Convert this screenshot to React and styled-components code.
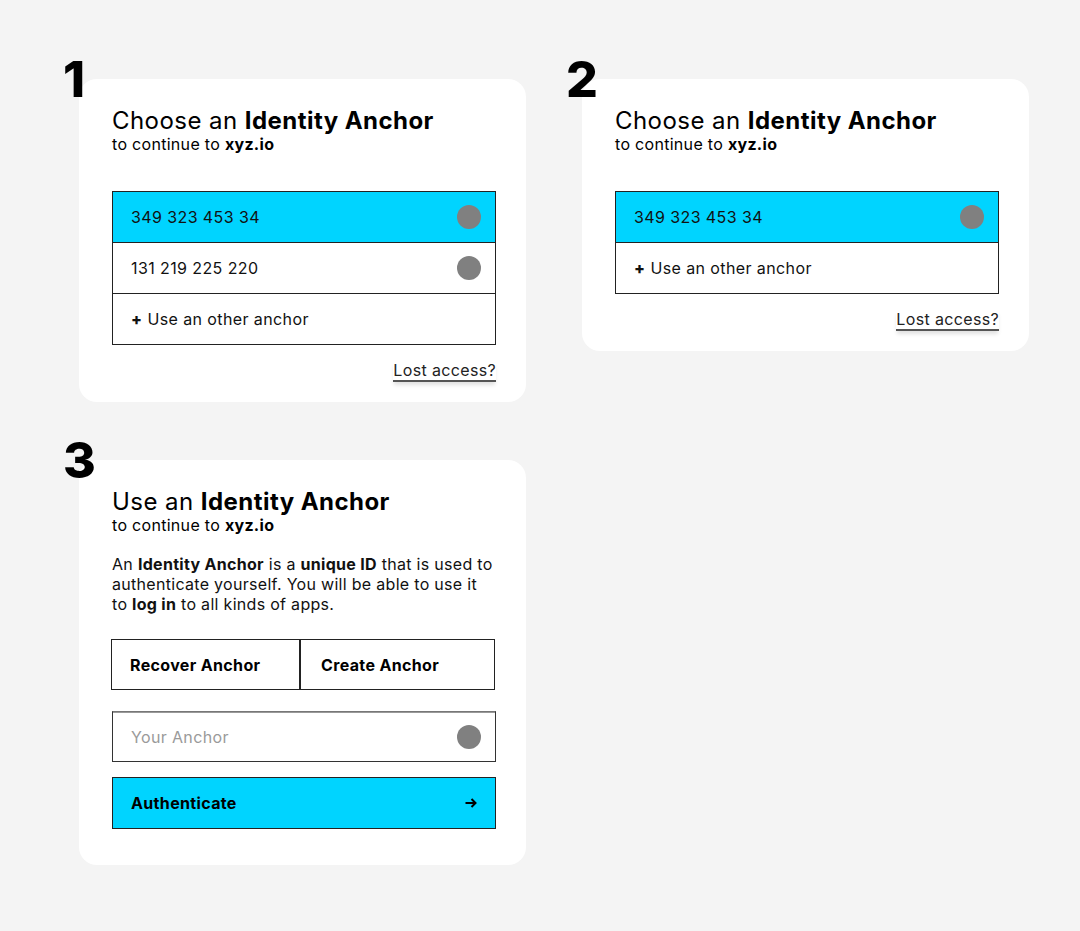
import React from "react";
import styled, { createGlobalStyle } from "styled-components";

const GlobalStyle = createGlobalStyle`
  * { box-sizing: border-box; }
  body {
    margin: 0;
    background: #f4f4f4;
    font-family: Inter, "Noto Sans", sans-serif;
    color: #111;
  }
`;

const Page = styled.div`
  display: grid;
  grid-template-columns: 447px 447px;
  align-content: start;
  align-items: start;
  column-gap: 56px;
  row-gap: 58px;
  padding: 79px 0 68px 79px;
`;

const Card = styled.section`
  position: relative;
  background: #fff;
  border-radius: 18px;
  padding: 27px 30px ${(p) => p.$bottom || "20px"} 33px;
  display: flex;
  flex-direction: column;
`;

const StepNumber = styled.span`
  position: absolute;
  left: -16px;
  top: -25px;
  font-size: 50px;
  line-height: 1;
  font-weight: 800;
  color: #000;
`;

const Title = styled.h1`
  margin: 0;
  font-size: 24px;
  font-weight: 400;
  line-height: 29px;
  letter-spacing: 0.45px;
  color: #000;

  b {
    font-weight: 700;
  }
`;

const Subtitle = styled.p`
  margin: 0;
  font-size: 16px;
  line-height: 19px;
  letter-spacing: 0.3px;
  color: #000;

  b {
    font-weight: 700;
  }
`;

const AnchorList = styled.div`
  display: flex;
  flex-direction: column;
  margin-top: 37px;
`;

const AnchorRow = styled.div`
  display: flex;
  align-items: center;
  justify-content: space-between;
  height: 52px;
  margin-top: -1px;
  padding: 0 14px 0 18px;
  border: 1px solid #222;
  background: ${(p) => (p.$active ? "#00d4ff" : "#fff")};
  font-size: 16px;
  letter-spacing: 0.4px;
  color: #111;

  &:first-child {
    margin-top: 0;
  }

  b {
    font-weight: 800;
    margin-right: 5px;
  }
`;

const Dot = styled.span`
  width: 24px;
  height: 24px;
  border-radius: 50%;
  background: #808080;
`;

const Footer = styled.div`
  display: flex;
  justify-content: flex-end;
  margin-top: 16px;
`;

const LostLink = styled.a`
  font-size: 16px;
  line-height: 19px;
  letter-spacing: 0.35px;
  color: #222;
  text-decoration: none;
  border-bottom: 2px solid #555;
  box-shadow: 0 4px 4px -1px rgba(0, 0, 0, 0.12);
  cursor: pointer;
`;

const Intro = styled.p`
  margin: 19px 0 0;
  font-size: 16px;
  line-height: 20px;
  letter-spacing: 0.3px;
  color: #111;

  b {
    font-weight: 700;
  }
`;

const ChoiceRow = styled.div`
  display: grid;
  grid-template-columns: 189px 195px;
  margin: 25px 0 0 -1px;
`;

const ChoiceButton = styled.button`
  height: 51px;
  border: 1px solid #222;
  border-radius: 0;
  background: #fff;
  text-align: left;
  padding: 0 0 0 ${(p) => p.$pad || "18px"};
  font-family: inherit;
  font-size: 16px;
  font-weight: 700;
  letter-spacing: 0.35px;
  color: #000;
`;

const AnchorField = styled.label`
  display: flex;
  align-items: center;
  justify-content: space-between;
  height: 51px;
  margin-top: 21px;
  padding: 0 14px 0 18px;
  border: 1px solid #333;
  border-top-color: #777;
  box-shadow: inset 0 1px 0 #999;
  background: #fff;
`;

const AnchorInput = styled.input`
  border: none;
  outline: none;
  flex: 1;
  font-family: inherit;
  font-size: 16px;
  letter-spacing: 0.35px;
  color: #111;
  background: transparent;
  padding: 0;

  &::placeholder {
    color: #9a9a9a;
  }
`;

const SubmitButton = styled.button`
  display: flex;
  align-items: center;
  justify-content: space-between;
  height: 52px;
  margin-top: 15px;
  padding: 0 17px 0 18px;
  border: 1px solid #222;
  border-radius: 0;
  background: #00d4ff;
  font-family: inherit;
  font-size: 16px;
  font-weight: 700;
  letter-spacing: 0.35px;
  color: #000;
`;

const ArrowIcon = () => (
  <svg width="14" height="14" viewBox="0 0 14 14" fill="none">
    <path d="M1.5 7h10M7.5 3l4 4-4 4" stroke="#000" strokeWidth="2" />
  </svg>
);

const ChooseCard = ({ step, anchors }) => (
  <Card>
    <StepNumber>{step}</StepNumber>
    <Title>
      Choose an <b>Identity Anchor</b>
    </Title>
    <Subtitle>
      to continue to <b>xyz.io</b>
    </Subtitle>
    <AnchorList>
      {anchors.map((anchor, index) => (
        <AnchorRow key={anchor} $active={index === 0}>
          {anchor}
          <Dot />
        </AnchorRow>
      ))}
      <AnchorRow>
        <span>
          <b>+</b>Use an other anchor
        </span>
      </AnchorRow>
    </AnchorList>
    <Footer>
      <LostLink>Lost access?</LostLink>
    </Footer>
  </Card>
);

export default function App() {
  return (
    <>
      <GlobalStyle />
      <Page>
        <ChooseCard step="1" anchors={["349 323 453 34", "131 219 225 220"]} />
        <ChooseCard step="2" anchors={["349 323 453 34"]} />

        <Card $bottom="36px">
          <StepNumber>3</StepNumber>
          <Title>
            Use an <b>Identity Anchor</b>
          </Title>
          <Subtitle>
            to continue to <b>xyz.io</b>
          </Subtitle>
          <Intro>
            An <b>Identity Anchor</b> is a <b>unique ID</b> that is used to
            authenticate yourself. You will be able to use it to <b>log in</b>{" "}
            to all kinds of apps.
          </Intro>
          <ChoiceRow>
            <ChoiceButton>Recover Anchor</ChoiceButton>
            <ChoiceButton $pad="20px">Create Anchor</ChoiceButton>
          </ChoiceRow>
          <AnchorField>
            <AnchorInput placeholder="Your Anchor" />
            <Dot />
          </AnchorField>
          <SubmitButton>
            Authenticate
            <ArrowIcon />
          </SubmitButton>
        </Card>
      </Page>
    </>
  );
}
